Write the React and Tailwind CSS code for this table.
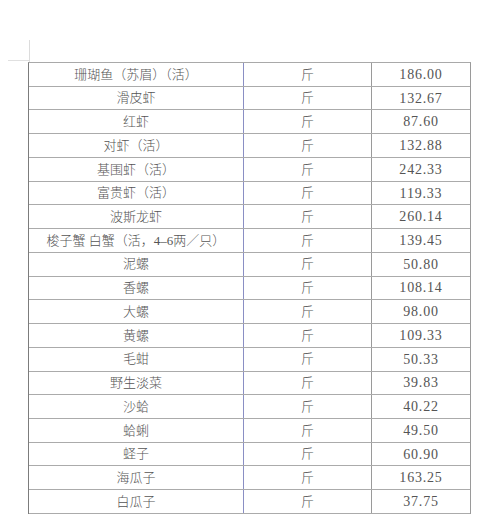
const rows = [
  ["珊瑚鱼（苏眉）（活）", "186.00"],
  ["滑皮虾", "132.67"],
  ["红虾", "87.60"],
  ["对虾（活）", "132.88"],
  ["基围虾（活）", "242.33"],
  ["富贵虾（活）", "119.33"],
  ["波斯龙虾", "260.14"],
  ["梭子蟹 白蟹（活，4–6两／只）", "139.45"],
  ["泥螺", "50.80"],
  ["香螺", "108.14"],
  ["大螺", "98.00"],
  ["黄螺", "109.33"],
  ["毛蚶", "50.33"],
  ["野生淡菜", "39.83"],
  ["沙蛤", "40.22"],
  ["蛤蜊", "49.50"],
  ["蛏子", "60.90"],
  ["海瓜子", "163.25"],
  ["白瓜子", "37.75"],
];

export default function App() {
  return (
    <div className="relative w-[500px] h-[515px] bg-white overflow-hidden">
      {/* crop marks */}
      <div className="absolute left-[29px] top-[40px] w-px h-[22px] bg-[#dcdcdc]" />
      <div className="absolute left-[8px] top-[60px] w-[21px] h-px bg-[#e0e0e0]" />

      <div className="pt-[62px] pl-[28px]">
        <div
          className="w-[443px] border-t border-l border-r border-t-[#a9a9a9] border-l-[#7c7c7c] border-r-[#9a9a9a] text-[#555]"
          style={{ fontFamily: '"Liberation Serif", "Noto Sans CJK SC", serif' }}
        >
          {rows.map(([name, price], i) => (
            <div
              key={i}
              className="grid grid-cols-[215px_128px_98px] h-[23.74px] border-b border-[#ababab]"
            >
              <div className="flex items-center justify-center border-r border-[#8a8fc4] text-[13px] font-light">
                {name}
              </div>
              <div className="flex items-center justify-center border-r border-[#9a9a9a] text-[13px] font-light">
                斤
              </div>
              <div className="flex items-center justify-center text-[14px] tracking-[0.8px]">
                {price}
              </div>
            </div>
          ))}
        </div>
      </div>
    </div>
  );
}
